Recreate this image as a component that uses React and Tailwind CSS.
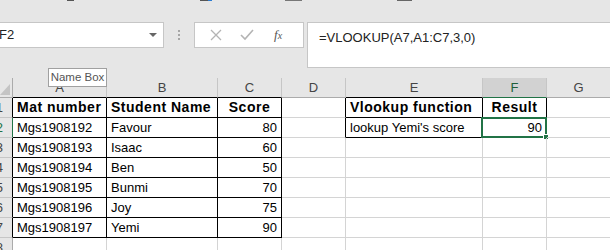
import React from "react";

const colWidths = [13, 94, 111, 64, 64, 137, 64, 64];
const letters = ["", "A", "B", "C", "D", "E", "F", "G"];

const rows = [
  ["Mat number", "Student Name", "Score", "", "Vlookup function", "Result", ""],
  ["Mgs1908192", "Favour", "80", "", "lookup Yemi's score", "90", ""],
  ["Mgs1908193", "Isaac", "60", "", "", "", ""],
  ["Mgs1908194", "Ben", "50", "", "", "", ""],
  ["Mgs1908195", "Bunmi", "70", "", "", "", ""],
  ["Mgs1908196", "Joy", "75", "", "", "", ""],
  ["Mgs1908197", "Yemi", "90", "", "", "", ""],
  ["", "", "", "", "", "", ""],
];

// cells inside the black bordered tables
const inTable = (r, c) =>
  (r >= 0 && r <= 6 && c >= 1 && c <= 3) || (r >= 0 && r <= 1 && c >= 5 && c <= 6);

const Cell = ({ r, c, value }) => {
  const black = inTable(r, c) || (c === 4 && r <= 1);
  const bottomBlack = inTable(r, c);
  const bold = r === 0;
  const numeric = /^\d+$/.test(value);
  const centered = bold && (c === 3 || c === 6);
  return (
    <div
      className={`relative h-[20px] border-r border-b flex items-center px-[4px] whitespace-nowrap text-[13px] text-black ${
        black ? "border-r-black" : "border-r-[#d4d4d4]"
      } ${bottomBlack ? "border-b-black" : "border-b-[#d4d4d4]"} ${
        bold ? "font-bold text-[14px] tracking-[0.5px]" : ""
      } ${numeric ? "justify-end" : centered ? "justify-center" : "justify-start"}`}
    >
      {value}
      {r === 1 && c === 6 && (
        <div className="absolute -left-[2px] -top-[1px] -right-[1px] -bottom-[1px] border-2 border-[#217346]">
          <div className="absolute -right-[4px] -bottom-[4px] w-[6px] h-[6px] bg-[#217346] border border-white" />
        </div>
      )}
    </div>
  );
};

const RowHead = ({ n }) => {
  const sel = n === 2;
  return (
    <div
      className={`h-[20px] border-b border-b-[#c6c6c6] border-r overflow-hidden flex items-center justify-end pr-[9px] bg-[#e6e6e6] text-[13px] ${
        sel
          ? "border-r-[#217346] text-[#217346]"
          : n <= 7
          ? "border-r-black text-[#444]"
          : "border-r-[#ababab] text-[#444]"
      }`}
    >
      {n}
    </div>
  );
};

export default function App() {
  return (
    <div
      className="w-[610px] h-[250px] overflow-hidden bg-white"
      style={{ fontFamily: '"Liberation Sans", Arial, sans-serif' }}
    >
      <div className="h-[78px] bg-[#e6e6e6] relative">
        {/* bits of the ribbon above */}
        <div className="flex h-[2px] items-start">
          <div className="w-[67px]" />
          <div className="w-[7px] h-[1px] bg-[#555]" />
          <div className="w-[126px]" />
          <div className="w-[8px] h-[1px] bg-[#555]" />
          <div className="w-[4px] h-[1px] bg-[#2a7bd1]" />
          <div className="w-[73px]" />
          <div className="w-[17px] h-[1px] bg-[#777]" />
          <div className="w-[95px]" />
          <div className="w-[15px] h-[1px] bg-[#666]" />
        </div>
        <div className="flex items-start mt-[20px]">
          {/* name box */}
          <div className="w-[164px] h-[26px] bg-white border border-l-0 border-[#c6c6c6] flex items-center justify-between pr-[6px]">
            <span className="text-[13px] text-[#222] -ml-[1px]">F2</span>
            <svg width="8" height="4" viewBox="0 0 8 4">
              <path d="M0 0 L8 0 L4 4 Z" fill="#666" />
            </svg>
          </div>
          <div className="w-[30px] h-[26px] flex flex-col items-center justify-center gap-[2px]">
            <div className="w-[2px] h-[2px] bg-[#a6a6a6]" />
            <div className="w-[2px] h-[2px] bg-[#a6a6a6]" />
            <div className="w-[2px] h-[2px] bg-[#a6a6a6]" />
          </div>
          {/* cancel / enter / fx */}
          <div className="w-[110px] h-[26px] bg-white border border-[#c6c6c6] flex items-center">
            <svg width="12" height="12" viewBox="0 0 12 12" className="ml-[15px]">
              <path d="M1 1 L11 11 M11 1 L1 11" stroke="#b4b4b4" strokeWidth="1.3" />
            </svg>
            <svg width="14" height="12" viewBox="0 0 14 12" className="ml-[18px]">
              <path d="M1 6 L5 10 L13 1" stroke="#b4b4b4" strokeWidth="1.6" fill="none" />
            </svg>
            <span
              className="ml-[20px] text-[13px] italic text-[#555]"
              style={{ fontFamily: '"Liberation Serif", serif' }}
            >
              f<span className="text-[10px]">x</span>
            </span>
          </div>
          <div className="ml-[3px] flex-1 h-[46px] bg-white border border-r-0 border-[#c6c6c6] pl-[11px] pt-[5px] text-[13px] text-[#222]">
            =VLOOKUP(A7,A1:C7,3,0)
          </div>
        </div>
        {/* tooltip */}
        <div className="absolute left-[48px] top-[68px] z-10 h-[19px] w-[59px] bg-white border border-[#a0a0a0] flex items-center justify-center text-[11.5px] text-[#555]">
          Name Box
        </div>
      </div>

      <div
        className="grid"
        style={{ gridTemplateColumns: colWidths.map((w) => w + "px").join(" ") }}
      >
        {/* column headers */}
        {letters.map((l, c) => {
          if (c === 0)
            return (
              <div
                key="corner"
                className="h-[20px] bg-[#e6e6e6] border-r border-b border-[#ababab] flex items-end justify-end pr-[2px] pb-[2px]"
              >
                <svg width="10" height="11" viewBox="0 0 10 11">
                  <path d="M10 0 L10 11 L0 11 Z" fill="#c4c4c4" />
                </svg>
              </div>
            );
          const sel = c === 6;
          const blackBottom = c >= 1 && c <= 5 && c !== 4;
          return (
            <div
              key={l}
              className={`h-[20px] border-r border-r-[#c6c6c6] border-b flex items-center justify-center text-[13px] ${
                sel
                  ? "bg-[#d2d2d2] border-b-[#217346] text-[#1f5e3a]"
                  : "bg-[#e6e6e6] text-[#444]"
              } ${sel ? "" : blackBottom ? "border-b-black" : "border-b-[#ababab]"}`}
            >
              {l}
            </div>
          );
        })}
        {rows.map((row, r) => (
          <React.Fragment key={r}>
            <RowHead n={r + 1} />
            {row.map((v, i) => (
              <Cell key={i} r={r} c={i + 1} value={v} />
            ))}
          </React.Fragment>
        ))}
      </div>
    </div>
  );
}
